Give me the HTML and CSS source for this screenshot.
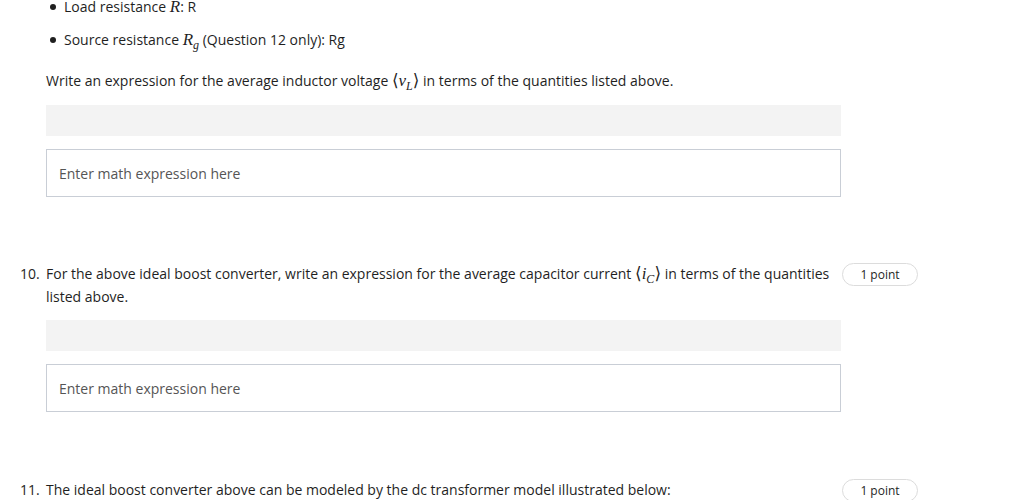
FILE: index.html
```html
<!DOCTYPE html>
<html>
<head>
<meta charset="utf-8">
<link rel="stylesheet" href="styles.css">
</head>
<body>
<div class="page">
  <section class="cont">
    <ul class="bullets">
      <li><span class="dot"></span><span>Load resistance <span class="m">R</span>: R</span></li>
      <li><span class="dot"></span><span>Source resistance <span class="m">R<sub>g</sub></span> (Question 12 only): Rg</span></li>
    </ul>
    <p class="prompt">Write an expression for the average inductor voltage <span class="mr">⟨<span class="m">v<sub>L</sub></span>⟩</span> in terms of the quantities listed above.</p>
    <div class="preview"></div>
    <div class="input">Enter math expression here</div>
  </section>

  <section class="q">
    <div class="num">10.</div>
    <div class="body">
      <p class="qtext">For the above ideal boost converter, write an expression for the average capacitor current <span class="mr">⟨<span class="m">i<sub>C</sub></span>⟩</span> in terms of the quantities listed above.</p>
      <div class="preview"></div>
      <div class="input">Enter math expression here</div>
    </div>
    <div class="badge">1 point</div>
  </section>

  <section class="q q11">
    <div class="num">11.</div>
    <div class="body">
      <p class="qtext">The ideal boost converter above can be modeled by the dc transformer model illustrated below:</p>
    </div>
    <div class="badge">1 point</div>
  </section>
</div>
</body>
</html>
```
FILE: styles.css
```css
html, body {
  margin: 0;
  padding: 0;
  background: #fff;
  overflow: hidden;
}
body {
  font-family: "Open Sans", "Liberation Sans", sans-serif;
  font-size: 14px;
  line-height: 23px;
  color: #1f1f1f;
}
.page {
  padding-left: 20px;
  width: 900px;
}
.cont {
  margin-left: 26px;
  width: 795px;
  margin-top: -5px;
}
.bullets {
  list-style: none;
  margin: 0;
  padding: 0;
  display: flex;
  flex-direction: column;
  gap: 10px;
}
.bullets li {
  display: flex;
  align-items: center;
  height: 23px;
  padding-left: 4px;
}
.dot {
  width: 6px;
  height: 6px;
  border-radius: 50%;
  background: #1f1f1f;
  margin-right: 8px;
}
.m {
  font-family: "Liberation Serif", "DejaVu Serif", serif;
  font-style: italic;
  font-size: 17px;
  line-height: 0;
}
.mr .m {
  font-size: 1em;
}
.m sub {
  font-size: 12px;
  line-height: 0;
  vertical-align: -4px;
}
.mr {
  font-family: "Liberation Serif", "DejaVu Serif", serif;
  font-size: 17px;
  line-height: 0;
  color: #1f1f1f;
}
.prompt {
  margin: 18px 0 0 0;
}
.preview {
  height: 31px;
  background: #f3f3f3;
  margin-top: 13px;
}
.input {
  margin-top: 13px;
  height: 46px;
  border: 1px solid #c9ced6;
  box-sizing: content-box;
  padding: 0 12px;
  display: flex;
  align-items: center;
  color: #555;
}
.q {
  display: grid;
  grid-template-columns: 26px 795px 76px;
  margin-top: 65px;
}
.q11 {
  margin-top: 66px;
}
.num {
  line-height: 23px;
}
.qtext {
  margin: 0;
}
.body .preview {
  margin-top: 12px;
}
.badge {
  margin-left: 1px;
  margin-top: 1px;
  height: 21px;
  width: 74px;
  border: 1px solid #dcdcdc;
  border-radius: 12px;
  font-size: 12px;
  line-height: 21px;
  text-align: center;
  color: #1f1f1f;
  box-sizing: content-box;
  align-self: start;
}
```
